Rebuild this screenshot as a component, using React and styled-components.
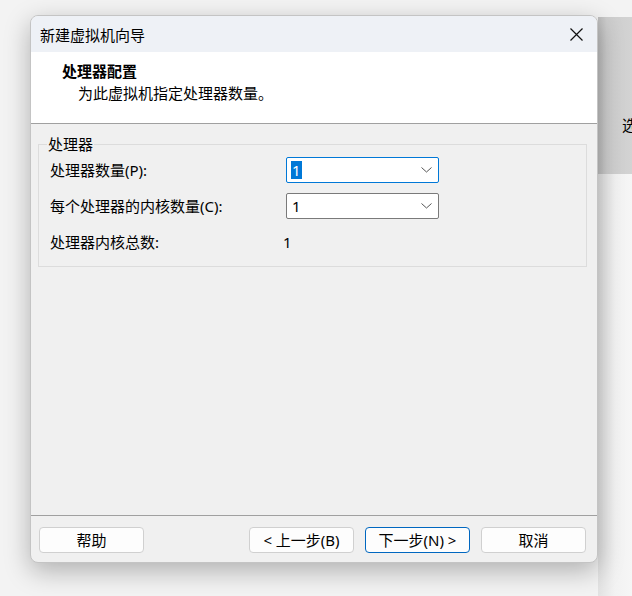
import React from 'react';
import styled, { createGlobalStyle } from 'styled-components';

const GlobalStyle = createGlobalStyle`
  html, body {
    margin: 0;
    padding: 0;
    background: #f3f3f3;
    overflow: hidden;
  }
  * { box-sizing: border-box; }
`;

const font = `"Noto Sans", "Noto Sans CJK SC", sans-serif`;

const Desktop = styled.div`
  position: relative;
  width: 632px;
  height: 596px;
  overflow: hidden;
  padding: 15px 0 0 30px;
  font-family: ${font};
  font-size: 15px;
  color: #000;
`;

// window behind the dialog, mostly hidden past the right edge
const BackWindow = styled.div`
  position: absolute;
  left: 598px;
  top: 17px;
  width: 34px;
  height: 579px;
  overflow: hidden;
  display: flex;
  flex-direction: column;
`;

const BackTop = styled.div`
  height: 157px;
  flex-shrink: 0;
  background: linear-gradient(90deg, #bdbdbd 0%, #cdcdcd 25%, #d3d3d3 100%);
  padding: 98px 0 0 24px;
  line-height: 20px;
  white-space: nowrap;
`;

const BackBottom = styled.div`
  flex: 1;
  background: linear-gradient(90deg, #e2e2e2 0%, #f2f2f2 50%, #f6f6f6 100%);
`;

const Dialog = styled.div`
  position: relative;
  z-index: 2;
  width: 568px;
  height: 548px;
  display: flex;
  flex-direction: column;
  background: #f0f0f0;
  border: 1px solid #c4c4c4;
  border-radius: 8px;
  overflow: hidden;
  box-shadow: 0 8px 26px rgba(0, 0, 0, 0.28);
`;

const TitleBar = styled.div`
  height: 36px;
  flex-shrink: 0;
  display: flex;
  align-items: center;
  justify-content: space-between;
  padding: 0 14px 0 9px;
  background: #eef1f6;
`;

const Header = styled.div`
  height: 72px;
  flex-shrink: 0;
  background: #fff;
  border-bottom: 1px solid #a0a0a0;
  padding: 9px 0 0 31px;
  display: flex;
  flex-direction: column;
  gap: 2px;
  line-height: 20px;
`;

const HeaderTitle = styled.div`
  font-weight: 700;
`;

const HeaderSub = styled.div`
  padding-left: 16px;
`;

const Body = styled.div`
  flex: 1;
  padding: 10px 10px 0 7px;
`;

const Group = styled.fieldset`
  margin: 0;
  border: 1px solid #dcdcdc;
  padding: 3px 0 11px 11px;
`;

const Legend = styled.legend`
  padding: 0 1px;
  margin-left: -3px;
  line-height: 20px;
`;

const Grid = styled.div`
  display: grid;
  grid-template-columns: 236px 153px;
  row-gap: 10px;
  align-items: center;
`;

const Label = styled.div`
  line-height: 26px;
`;

const Value = styled.div`
  margin-left: -3px;
  line-height: 26px;
`;

const Combo = styled.div`
  height: 26px;
  display: flex;
  align-items: center;
  justify-content: space-between;
  padding: 0 6px 0 4px;
  background: #fff;
  border: 1px solid ${p => (p.$focused ? '#0078d7' : '#7a7a7a')};
  border-radius: 2px;
`;

const ComboText = styled.span`
  line-height: 18px;
  padding: 0 1px;
  background: ${p => (p.$selected ? '#0078d7' : 'transparent')};
  color: ${p => (p.$selected ? '#fff' : '#000')};
`;

const Footer = styled.div`
  height: 47px;
  flex-shrink: 0;
  border-top: 1px solid #a0a0a0;
  display: flex;
  align-items: flex-start;
  gap: 11px;
  padding: 11px 11px 0 8px;
`;

const Button = styled.button`
  width: 105px;
  height: 26px;
  font-family: ${font};
  font-size: 15px;
  color: #000;
  background: #fdfdfd;
  border: 1px solid ${p => (p.$primary ? '#0067c0' : '#d0d0d0')};
  border-radius: 4px;
  padding: 0;
  line-height: 22px;
  margin-left: ${p => (p.$push ? 'auto' : '0')};
`;

const Chevron = () => (
  <svg width="11" height="6" viewBox="0 0 11 6">
    <path d="M0.5 0.5 L5.5 5 L10.5 0.5" fill="none" stroke="#555" strokeWidth="1" />
  </svg>
);

const CloseIcon = () => (
  <svg width="13" height="13" viewBox="0 0 13 13">
    <path d="M0.5 0.5 L12.5 12.5 M12.5 0.5 L0.5 12.5" stroke="#111" strokeWidth="1.2" />
  </svg>
);

export default function App() {
  return (
    <Desktop>
      <GlobalStyle />
      <BackWindow>
        <BackTop>选</BackTop>
        <BackBottom />
      </BackWindow>
      <Dialog>
        <TitleBar>
          <span>新建虚拟机向导</span>
          <CloseIcon />
        </TitleBar>
        <Header>
          <HeaderTitle>处理器配置</HeaderTitle>
          <HeaderSub>为此虚拟机指定处理器数量。</HeaderSub>
        </Header>
        <Body>
          <Group>
            <Legend>处理器</Legend>
            <Grid>
              <Label>处理器数量(P):</Label>
              <Combo $focused>
                <ComboText $selected>1</ComboText>
                <Chevron />
              </Combo>
              <Label>每个处理器的内核数量(C):</Label>
              <Combo>
                <ComboText>1</ComboText>
                <Chevron />
              </Combo>
              <Label>处理器内核总数:</Label>
              <Value>1</Value>
            </Grid>
          </Group>
        </Body>
        <Footer>
          <Button>帮助</Button>
          <Button $push>&lt; 上一步(B)</Button>
          <Button $primary>下一步(N) &gt;</Button>
          <Button>取消</Button>
        </Footer>
      </Dialog>
    </Desktop>
  );
}
